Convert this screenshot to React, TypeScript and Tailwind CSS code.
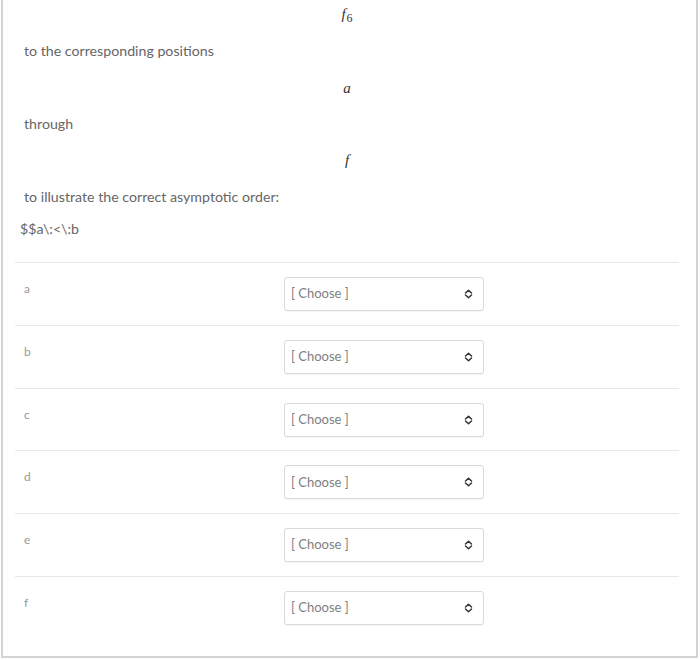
const rows = ['a', 'b', 'c', 'd', 'e', 'f'];

function UpDownIcon() {
  return (
    <svg width="9" height="10" viewBox="0 0 9 10" fill="none" stroke="#333" strokeWidth="1.5" strokeLinecap="round" strokeLinejoin="round">
      <path d="M1.5 4 L4.5 1.2 L7.5 4" />
      <path d="M1.5 6 L4.5 8.8 L7.5 6" />
    </svg>
  );
}

function ChooseSelect() {
  return (
    <div className="flex h-[34px] w-[200px] items-center justify-between rounded-[3px] border border-[#d9d9d9] bg-white pl-[6px] pr-[10px] shadow-[0_1px_1px_rgba(0,0,0,0.04)]">
      <span className="text-[13px] text-[#808080]">[ Choose ]</span>
      <UpDownIcon />
    </div>
  );
}

function MathLine({ children, className }: { children: React.ReactNode; className: string }) {
  return (
    <div
      className={`text-center text-[15px] leading-[20px] italic text-[#333] ${className}`}
      style={{ fontFamily: '"Liberation Serif", "DejaVu Serif", serif' }}
    >
      {children}
    </div>
  );
}

export default function App() {
  return (
    <div className="h-[660px] overflow-hidden bg-white" style={{ fontFamily: 'Lato, "Noto Sans", sans-serif' }}>
      <div className="ml-px w-[697px] border-x-2 border-b-2 border-[#d4d4d4] pb-[17px] pl-[12px] pr-[17px]">
        <MathLine className="pt-[4px]">
          f<sub className="ml-px text-[12px] not-italic">6</sub>
        </MathLine>
        <p className="mt-[17px] pl-[9px] text-[14.2px] leading-[20px] text-[#666]">to the corresponding positions</p>
        <MathLine className="mt-[17px]">a</MathLine>
        <p className="mt-[16px] pl-[9px] text-[14.2px] leading-[20px] text-[#666]">through</p>
        <MathLine className="mt-[16px]">f</MathLine>
        <p className="mt-[17px] pl-[9px] text-[14.2px] leading-[20px] text-[#666]">to illustrate the correct asymptotic order:</p>
        <p className="mt-[12px] pl-[5px] text-[14.2px] leading-[20px] text-[#666]">$$a\:&lt;\:b</p>

        <div className="mt-[23px]">
          {rows.map((label) => (
            <div key={label} className="flex items-start border-t border-[#e8e8e8] pb-[13.8px] pt-[14px]">
              <div className="mt-[2px] w-[269px] shrink-0 pl-[9px] text-[12px] leading-[20px] text-[#999]">{label}</div>
              <ChooseSelect />
            </div>
          ))}
        </div>
      </div>
    </div>
  );
}
